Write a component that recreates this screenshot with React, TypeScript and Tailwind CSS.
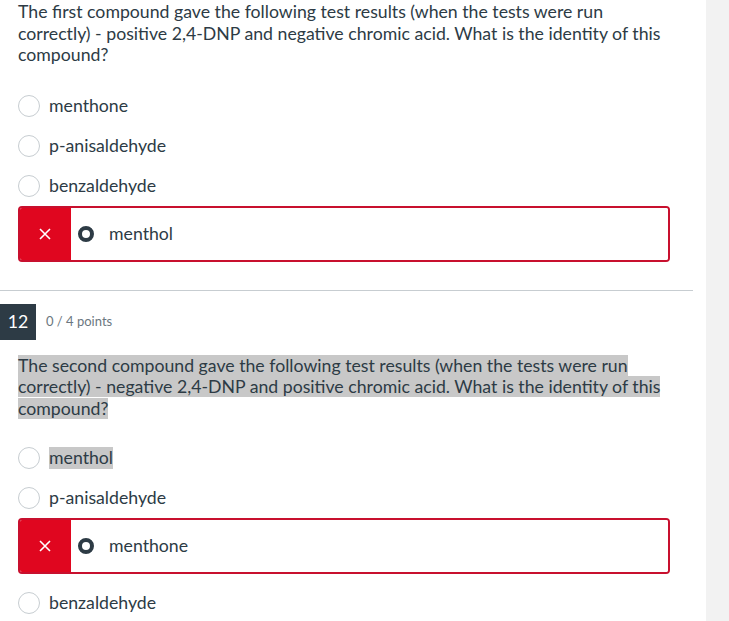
import React from "react";

const font = { fontFamily: "Lato, 'Open Sans', sans-serif" };

function Radio() {
  return <span className="inline-block w-[22px] h-[22px] rounded-full border border-[#c7cdd1] bg-white shrink-0" />;
}

function Option({ label, hl }: { label: string; hl?: boolean }) {
  return (
    <div className="flex items-center h-[40px] pl-[18px]">
      <Radio />
      <span className={"ml-[9px] " + (hl ? "bg-[#c8c8c8]" : "")}>{label}</span>
    </div>
  );
}

function Wrong({ label }: { label: string }) {
  return (
    <div className="ml-[18px] mr-[36px] h-[56px] flex rounded-[4px] border-2 border-[#c8102e] overflow-hidden">
      <div className="w-[53px] bg-[#e0061f] flex items-center justify-center -ml-[2px]">
        <svg width="12" height="12" viewBox="0 0 12 12">
          <path d="M1 1 L11 11 M11 1 L1 11" stroke="white" strokeWidth="1.6" />
        </svg>
      </div>
      <div className="flex items-center pl-[7px] bg-white flex-1">
        <span className="w-[16px] h-[16px] rounded-full border-[4px] border-[#2d3b45] bg-white" />
        <span className="ml-[15px]">{label}</span>
      </div>
    </div>
  );
}

export default function App() {
  return (
    <div className="w-[729px] h-[621px] overflow-hidden flex bg-white text-[#2d3b45] text-[17.7px] leading-[21.5px]" style={font}>
      <div className="w-[706px] shrink-0">
        <p className="pl-[18px] pr-[36px] pt-[1px]">
          The first compound gave the following test results (when the tests were run correctly) - positive 2,4-DNP and negative chromic acid. What is the identity of this compound?
        </p>
        <div className="mt-[20px]">
          <Option label="menthone" />
          <Option label="p-anisaldehyde" />
          <Option label="benzaldehyde" />
          <Wrong label="menthol" />
        </div>
        <div className="mt-[28px] mr-[13px] border-t border-[#c7cdd1]" />
        <div className="mt-[13px] flex items-center">
          <div className="w-[36px] h-[36px] bg-[#2d3b45] text-white flex items-center justify-center text-[17.7px]">12</div>
          <span className="ml-[10px] text-[13px] text-[#6b7780]">0 / 4 points</span>
        </div>
        <p className="pl-[18px] pr-[36px] mt-[15px]">
          <span className="bg-[#c8c8c8]">
            The second compound gave the following test results (when the tests were run correctly) - negative 2,4-DNP and positive chromic acid. What is the identity of this compound?
          </span>
        </p>
        <div className="mt-[19px]">
          <Option label="menthol" hl />
          <Option label="p-anisaldehyde" />
          <Wrong label="menthone" />
          <div className="mt-[9px]">
            <Option label="benzaldehyde" />
          </div>
        </div>
      </div>
      <div className="flex-1 bg-[#f2f2f2]" />
    </div>
  );
}
